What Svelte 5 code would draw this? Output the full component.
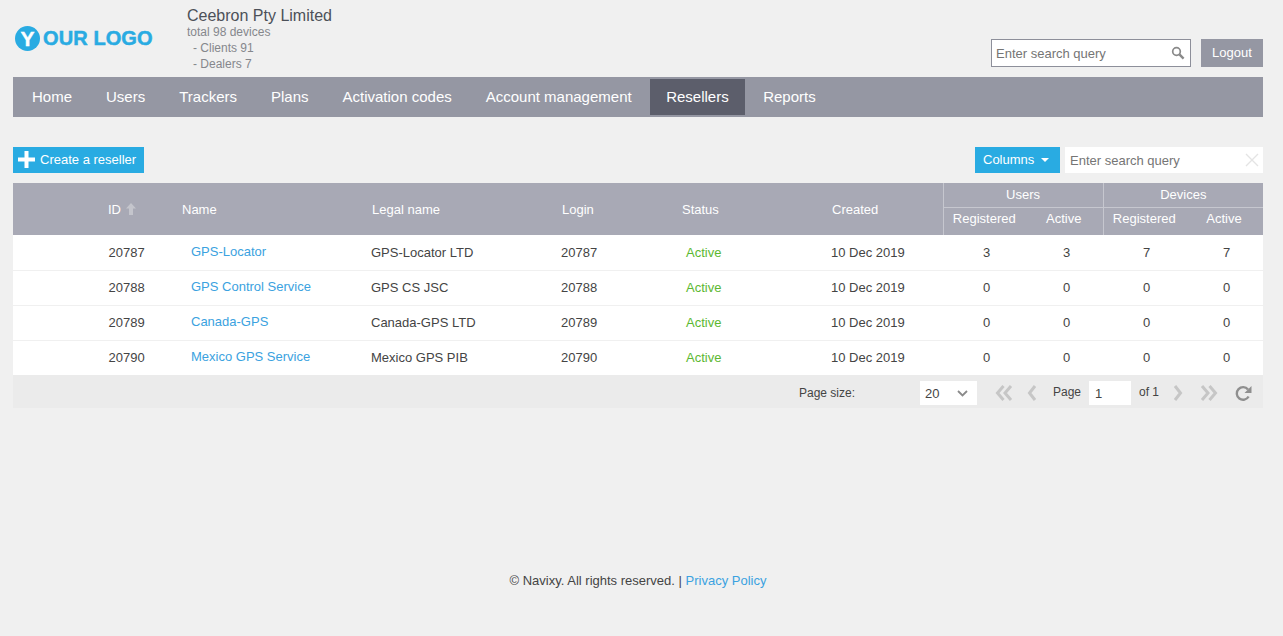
<script>
  const nav = ['Home', 'Users', 'Trackers', 'Plans', 'Activation codes', 'Account management', 'Resellers', 'Reports'];
  const rows = [
    { id: 20787, name: 'GPS-Locator', legal: 'GPS-Locator LTD', v: [3, 3, 7, 7] },
    { id: 20788, name: 'GPS Control Service', legal: 'GPS CS JSC', v: [0, 0, 0, 0] },
    { id: 20789, name: 'Canada-GPS', legal: 'Canada-GPS LTD', v: [0, 0, 0, 0] },
    { id: 20790, name: 'Mexico GPS Service', legal: 'Mexico GPS PIB', v: [0, 0, 0, 0] }
  ];
</script>

<div class="page">
  <header class="top">
    <div class="logo"><span class="circle">Y</span><span class="logotext">OUR LOGO</span></div>
    <div class="company">
      <div class="cname">Ceebron Pty Limited</div>
      <div class="cline">total 98 devices</div>
      <div class="cline ind">- Clients 91</div>
      <div class="cline ind">- Dealers 7</div>
    </div>
    <div class="topright">
      <div class="topsearch">
        <span>Enter search query</span>
        <svg width="14" height="14" viewBox="0 0 14 14"><circle cx="5.500" cy="5.500" r="3.800" fill="none" stroke="#8a8a8a" stroke-width="1.700"/><path d="M8.400 8.400 L12.600 12.600" stroke="#8a8a8a" stroke-width="2.400"/></svg>
      </div>
      <div class="logout">Logout</div>
    </div>
  </header>

  <nav class="nav">
    {#each nav as n}
      <div class="navitem" class:active={n === 'Resellers'}>{n}</div>
    {/each}
  </nav>

  <div class="toolbar">
    <div class="create">
      <svg width="17" height="17" viewBox="0 0 17 17"><path d="M6.500 0h4v6.500h6.500v4h-6.500v6.500h-4v-6.500h-6.500v-4h6.500z" fill="#fff"/></svg>
      <span>Create a reseller</span>
    </div>
    <div class="tools">
      <div class="columns">Columns <i class="caret"></i></div>
      <div class="tsearch">
        <span>Enter search query</span>
        <svg width="14" height="14" viewBox="0 0 14 14"><path d="M1 1L13 13M13 1L1 13" stroke="#e4e4e4" stroke-width="1.400"/></svg>
      </div>
    </div>
  </div>

  <table>
    <colgroup>
      <col class="c0" /><col class="c1" /><col class="c2" /><col class="c3" /><col class="c4" /><col class="c5" /><col class="c6" /><col class="c7" /><col class="c7" /><col class="c7" /><col class="c7" />
    </colgroup>
    <thead>
      <tr class="h1">
        <th rowspan="2"></th>
        <th rowspan="2" class="l">ID <svg class="up" width="10" height="12" viewBox="0 0 10 12"><path d="M5 0L10 5.500H7V12H3V5.500H0z" fill="#c4c5cc"/></svg></th>
        <th rowspan="2" class="l">Name</th>
        <th rowspan="2" class="l">Legal name</th>
        <th rowspan="2" class="l">Login</th>
        <th rowspan="2" class="l">Status</th>
        <th rowspan="2" class="l">Created</th>
        <th colspan="2" class="g">Users</th>
        <th colspan="2" class="g">Devices</th>
      </tr>
      <tr class="h2">
        <th class="g">Registered</th><th>Active</th>
        <th class="g">Registered</th><th>Active</th>
      </tr>
    </thead>
    <tbody>
      {#each rows as r}
        <tr>
          <td></td>
          <td class="pid">{r.id}</td>
          <td class="pn"><span class="link">{r.name}</span></td>
          <td class="pl">{r.legal}</td>
          <td class="pl">{r.id}</td>
          <td class="st">Active</td>
          <td class="pl">10 Dec 2019</td>
          {#each r.v as x}<td class="num">{x}</td>{/each}
        </tr>
      {/each}
    </tbody>
  </table>

  <div class="pager">
    <span class="psize">Page size:</span>
    <div class="select">
      <span>20</span>
      <svg width="11" height="7" viewBox="0 0 11 7"><path d="M1 1L5.500 5.500L10 1" fill="none" stroke="#8a8a8a" stroke-width="1.800"/></svg>
    </div>
    <svg class="first" width="18" height="16" viewBox="0 0 18 16"><path d="M8.500 1L2.500 8L8.500 15M16 1L10 8L16 15" fill="none" stroke="#c6c6c6" stroke-width="3"/></svg>
    <svg class="prev" width="10" height="16" viewBox="0 0 10 16"><path d="M8 1L2.500 8L8 15" fill="none" stroke="#c6c6c6" stroke-width="3"/></svg>
    <span class="plabel">Page</span>
    <div class="pinput">1</div>
    <span class="pof">of 1</span>
    <svg class="next" width="10" height="16" viewBox="0 0 10 16"><path d="M2 1L7.500 8L2 15" fill="none" stroke="#c6c6c6" stroke-width="3"/></svg>
    <svg class="last" width="18" height="16" viewBox="0 0 18 16"><path d="M2 1L8 8L2 15M9.500 1L15.500 8L9.500 15" fill="none" stroke="#c6c6c6" stroke-width="3"/></svg>
    <svg class="refresh" width="17" height="17" viewBox="0 0 17 17"><path d="M13.600 11.500A6.300 6.300 0 1 1 13 4.500" fill="none" stroke="#8f8f8f" stroke-width="2.400"/><path d="M16.500 1V8H9.500z" fill="#8f8f8f"/></svg>
  </div>

  <footer class="foot">© Navixy. All rights reserved. | <span class="link">Privacy Policy</span></footer>
</div>

<style>
  :global(body) { margin: 0; background: #f0f0f0; }
  .page { width: 1250px; margin-left: 13px; height: 636px; font: 14px "Liberation Sans", Arial, sans-serif; color: #444; overflow: hidden; }
  .top { display: flex; height: 77px; }
  .logo { display: flex; align-items: center; width: 174px; padding: 0 0 0 2px; box-sizing: border-box; height: 77px; }
  .circle { width: 25px; height: 25px; margin-right: 3px; border-radius: 50%; background: #29abe2; color: #fff; font-weight: 700; font-size: 21px; line-height: 25px; text-align: center; flex: none; -webkit-text-stroke: 0.400px #fff; }
  .logotext { color: #29abe2; font-weight: 700; font-size: 20px; white-space: nowrap; letter-spacing: 0.100px; -webkit-text-stroke: 0.500px #29abe2; }
  .company { padding-top: 7px; }
  .cname { font-size: 16px; line-height: 17px; color: #4c5058; }
  .cline { font-size: 12px; line-height: 16px; color: #85878c; }
  .ind { padding-left: 6px; }
  .topright { margin-left: auto; display: flex; align-items: flex-start; padding-top: 39px; gap: 10px; }
  .topsearch { width: 200px; height: 28px; box-sizing: border-box; background: #fff; border: 1px solid #8d8f9a; display: flex; align-items: center; justify-content: space-between; padding: 0 5px 0 4px; font-size: 13px; color: #757575; }
  .logout { width: 62px; height: 28px; background: #9597a3; color: #fff; font-size: 13px; line-height: 27px; text-align: center; }
  .nav { display: flex; height: 40px; background: #9597a3; padding-left: 2px; }
  .navitem { padding: 2px 17px 0; line-height: 36px; height: 36px; font-size: 15px; color: #fff; }
  .navitem.active { background: #5c5e6b; padding: 0 16.500px; margin: 2px 1px 0; line-height: 36px; }
  .toolbar { display: flex; justify-content: space-between; margin-top: 30px; height: 26px; }
  .create { display: flex; align-items: center; gap: 5px; background: #29abe2; color: #fff; height: 26px; width: 131px; box-sizing: border-box; padding: 0 0 1px 5px; font-size: 13px; }
  .tools { display: flex; gap: 5px; }
  .columns { width: 85px; height: 26px; background: #29abe2; color: #fff; font-size: 13px; line-height: 25px; padding-left: 8px; box-sizing: border-box; }
  .caret { display: inline-block; margin-left: 3px; vertical-align: 2px; border: 4px solid transparent; border-top-color: #fff; border-bottom: 0; }
  .tsearch { width: 198px; height: 26px; background: #fff; display: flex; align-items: center; justify-content: space-between; padding: 0 4px 0 5px; box-sizing: border-box; font-size: 13px; color: #757575; }
  table { margin-top: 10px; width: 1250px; table-layout: fixed; border-collapse: collapse; }
  .c0 { width: 90px; } .c1 { width: 74px; } .c2 { width: 190px; } .c3 { width: 190px; } .c4 { width: 120px; } .c5 { width: 150px; } .c6 { width: 116px; } .c7 { width: 80px; }
  th { background: #a8a9b5; color: #fff; font-weight: 400; font-size: 13px; padding: 0; text-align: center; }
  th.l { text-align: left; padding-left: 5px; }
  .h1 th { height: 24px; }
  .h1 th.l { padding-top: 1px; }
  .h1 th.g { height: 24px; border-bottom: 1px solid #c6c7cf; padding-bottom: 0; box-sizing: border-box; }
  .h2 th { height: 28px; padding: 0 0 5px 2px; box-sizing: border-box; }
  th.g { border-left: 1px solid #c6c7cf; }
  .up { vertical-align: -1px; margin-left: 1px; }
  td { height: 34px; background: #fff; padding: 0 0 1px; box-sizing: border-box; font-size: 13px; color: #444; border-top: 1px solid #f0f0f0; }
  tbody td { height: 35px; }
  tbody tr:first-child td { border-top: 0; height: 35px; padding-bottom: 0; }
  .pl { padding-left: 4px; }
  .pid { padding-left: 5.500px; }
  .pn { padding-left: 14px; }
  .link { color: #3ba2e0; position: relative; top: -1px; }
  .foot .link { top: 0; }
  .st { padding-left: 9px; color: #5cb832; }
  .num { text-align: center; color: #444; padding-left: 7px; }
  .pager { display: flex; align-items: center; height: 33px; box-sizing: border-box; padding-top: 3px; background: #ebebeb; font-size: 12px; color: #444; }
  .psize { margin-left: 786px; width: 121px; }
  .select { width: 57px; height: 24px; background: #fff; display: flex; align-items: center; justify-content: space-between; padding: 0 9px 0 5px; box-sizing: border-box; font-size: 13px; }
  .first { margin-left: 18px; }
  .prev { margin-left: 14px; }
  .plabel { margin-left: 16px; position: relative; top: -1px; }
  .pinput { width: 42px; height: 24px; margin-left: 8px; background: #fff; box-sizing: border-box; padding: 6px 0 0 6px; font-size: 13px; line-height: 14px; }
  .pof { margin-left: 8px; position: relative; top: -1px; }
  .next { margin-left: 14px; }
  .last { margin-left: 17px; }
  .refresh { margin-left: 17px; }
  .foot { margin-top: 165px; text-align: center; font-size: 13px; color: #444; line-height: 16px; }
</style>
